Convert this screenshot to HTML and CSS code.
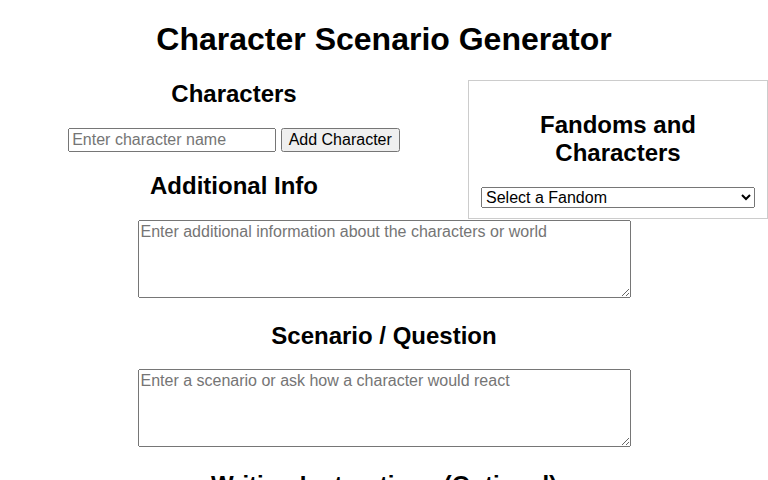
FILE: index.html
```html
<!DOCTYPE html>
<html lang="en">
<head>
<meta charset="utf-8">
<title>Character Scenario Generator</title>
<link rel="stylesheet" href="styles.css">
</head>
<body>
<h1>Character Scenario Generator</h1>
<div class="fandom-panel">
  <h2>Fandoms and Characters</h2>
  <select class="fandom-select">
    <option>Select a Fandom</option>
  </select>
</div>
<div class="characters">
  <h2>Characters</h2>
  <div class="char-row">
    <input type="text" class="char-input" placeholder="Enter character name">
    <button class="btn">Add Character</button>
  </div>
</div>
<h2>Additional Info</h2>
<div class="field">
  <textarea class="area" placeholder="Enter additional information about the characters or world"></textarea>
</div>
<h2>Scenario / Question</h2>
<div class="field">
  <textarea class="area" placeholder="Enter a scenario or ask how a character would react"></textarea>
</div>
<h2>Writing Instructions (Optional)</h2>
<div class="field">
  <textarea class="area" placeholder="Enter writing instructions"></textarea>
</div>
</body>
</html>
```
FILE: styles.css
```css
body {
  margin: 0;
  font-family: "Liberation Sans", Arial, sans-serif;
  text-align: center;
  color: #000;
  background: #fff;
}
h1 {
  font-size: 32px;
  margin: 21.44px 0;
}
h2 {
  font-size: 24px;
  margin: 19.92px 0;
}
.fandom-panel {
  float: right;
  width: 300px;
  box-sizing: border-box;
  border: 1px solid #ccc;
  padding: 10px 12px;
}
.fandom-select {
  width: 100%;
  font-family: "Liberation Sans", Arial, sans-serif;
  font-size: 16px;
  height: 21px;
}
.char-input {
  width: 208px;
  box-sizing: border-box;
  height: 24px;
  font-family: "Liberation Sans", Arial, sans-serif;
  font-size: 16px;
}
.btn {
  font-family: "Liberation Sans", Arial, sans-serif;
  font-size: 16px;
  height: 24px;
}
.area {
  width: 493px;
  height: 78px;
  box-sizing: border-box;
  font-family: "Liberation Sans", Arial, sans-serif;
  font-size: 16px;
  vertical-align: baseline;
}
```
